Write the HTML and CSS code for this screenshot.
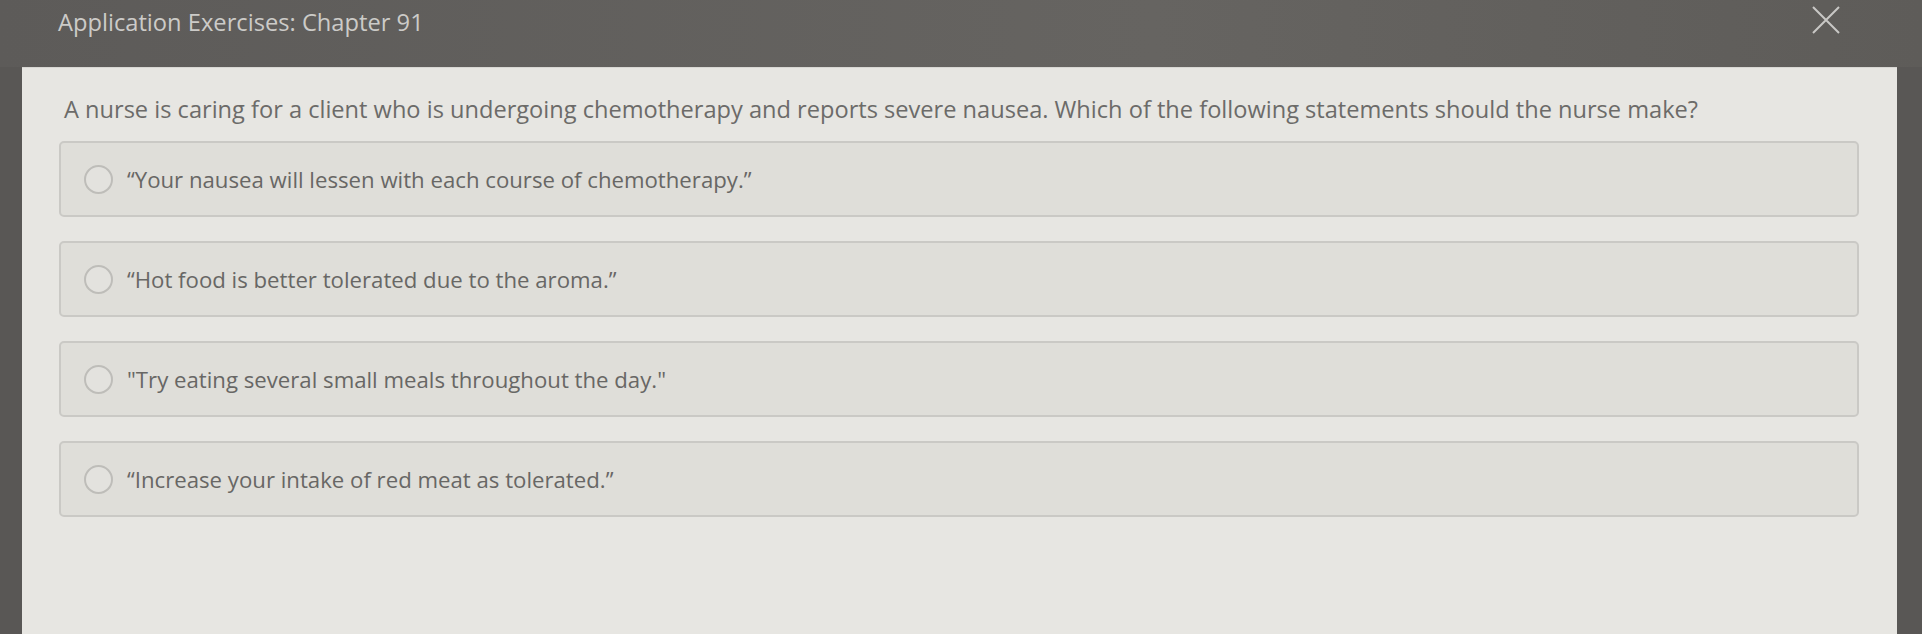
FILE: index.html
```html
<!DOCTYPE html>
<html lang="en">
<head>
    <meta charset="UTF-8">
    <title>Application Exercises: Chapter 91</title>
    <link rel="stylesheet" href="styles.css">
</head>
<body>
    <div class="screen">
        <!-- Header -->
        <div class="top-bar">
            <div class="title">Application Exercises: Chapter 91</div>
            <div class="close-btn">
                <svg width="28" height="28" viewBox="0 0 28 28">
                    <path d="M1 1 L27 27 M27 1 L1 27" stroke="#c9c8c5" stroke-width="2" fill="none"/>
                </svg>
            </div>
        </div>

        <!-- Question panel -->
        <div class="panel">
            <div class="question">A nurse is caring for a client who is undergoing chemotherapy and reports severe nausea. Which of the following statements should the nurse make?</div>

            <div class="options">
                <label class="option">
                    <span class="radio"></span>
                    <span class="option-text">“Your nausea will lessen with each course of chemotherapy.”</span>
                </label>
                <label class="option">
                    <span class="radio"></span>
                    <span class="option-text">“Hot food is better tolerated due to the aroma.”</span>
                </label>
                <label class="option">
                    <span class="radio"></span>
                    <span class="option-text">"Try eating several small meals throughout the day."</span>
                </label>
                <label class="option">
                    <span class="radio"></span>
                    <span class="option-text">“Increase your intake of red meat as tolerated.”</span>
                </label>
            </div>
        </div>
    </div>
</body>
</html>
```

FILE: styles.css
```css
* {
    margin: 0;
    padding: 0;
    box-sizing: border-box;
}

html, body {
    height: 100%;
    overflow: hidden;
}

body {
    font-family: "Open Sans", "Liberation Sans", Arial, sans-serif;
    background: #595755;
    color: #6a6a68;
}

.screen {
    display: flex;
    flex-direction: column;
    height: 100%;
}

/* Header */
.top-bar {
    height: 67px;
    padding: 0 82px 0 58px;
    display: flex;
    justify-content: space-between;
    align-items: flex-start;
    background: linear-gradient(90deg, #5d5b59, #666461 60%, #5e5c59);
}

.title {
    font-size: 23.7px;
    color: #cccbc8;
    line-height: 24px;
    padding-top: 10px;
}

.close-btn {
    padding-top: 6px;
}

/* Panel */
.panel {
    flex: 1;
    margin: 0 25px 0 22px;
    background: #e7e6e2;
    border-top: 1px solid #d8d7d3;
    padding: 27px 38px 0 37px;
}

.question {
    font-size: 23.6px;
    line-height: 28px;
    color: #6c6b69;
    padding-left: 5px;
    margin-bottom: 18px;
}

.options {
    display: flex;
    flex-direction: column;
    gap: 24px;
}

.option {
    height: 76px;
    display: flex;
    align-items: center;
    background: #dfded9;
    border: 2px solid #cac9c5;
    border-radius: 5px;
    padding-left: 23px;
}

.radio {
    width: 29px;
    height: 29px;
    border: 2px solid #bebdb9;
    border-radius: 50%;
    background: #e3e2de;
    margin-right: 14px;
    flex-shrink: 0;
}

.option-text {
    font-size: 22.2px;
    color: #686765;
}
```
